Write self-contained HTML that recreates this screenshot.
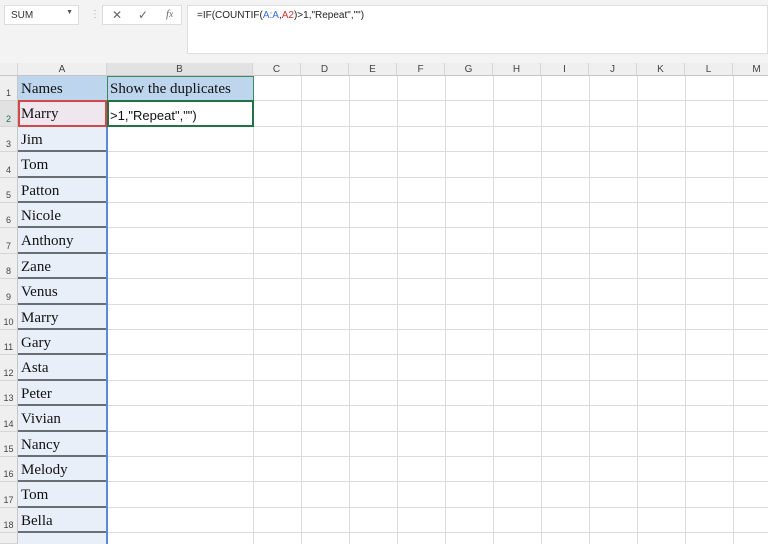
<!DOCTYPE html>
<html><head><meta charset="utf-8"><style>
*{margin:0;padding:0;box-sizing:border-box}
body{width:768px;height:544px;overflow:hidden;background:#fff;position:relative;font-family:"Liberation Sans",sans-serif}
.top{position:absolute;left:0;top:0;width:768px;height:63px;background:#f3f3f3}
.nb{position:absolute;left:4px;top:5px;width:75px;height:20px;background:#fff;border:1px solid #ddd;font-size:10px;color:#333;padding:4px 0 0 6px}
.fx{position:absolute;left:102px;top:5px;width:80px;height:20px;background:#fff;border:1px solid #ddd;color:#666;font-size:11px}
.fb{position:absolute;left:187px;top:5px;width:581px;height:49px;background:#fff;border:1px solid #ddd;font-size:10px;color:#222;padding:4px 0 0 9px}
.hdr{position:absolute;top:63px;height:13px;background:#efefef;border-right:1px solid #d6d6d6;border-bottom:1px solid #c6c6c6;font-size:10px;color:#444;text-align:center;line-height:13px}
.rh{position:absolute;left:0;width:18px;background:#efefef;border-bottom:1px solid #d6d6d6;border-right:1px solid #c6c6c6;font-size:9px;color:#444;text-align:center}
.grid{position:absolute;left:253px;top:76px;width:515px;height:468px;background-image:repeating-linear-gradient(to right,#dcdcdc 0 1px,transparent 1px 48px)}
.hl{position:absolute;left:18px;width:750px;height:1px;background:#dcdcdc}
.a{position:absolute;left:18px;width:89px;background:#e9eff9;border-bottom:2px solid #6a6e74;font-family:"Liberation Serif",serif;font-size:15px;color:#111;padding-left:3px}
</style></head><body>
<div class="top"></div>
<div class="nb">SUM<span style="position:absolute;right:5px;top:3px;font-size:7px;color:#555">▼</span></div>
<div style="position:absolute;left:90px;top:9px;color:#aaa;font-size:10px">⋮</div>
<div class="fx"><span style="position:absolute;left:9px;top:2px;font-size:12px">✕</span><span style="position:absolute;left:35px;top:2px;font-size:12px">✓</span><span style="position:absolute;left:63px;top:2px;font-family:'Liberation Serif',serif;font-style:italic;font-size:11px">f<small>x</small></span></div>
<div class="fb">=IF(COUNTIF(<span style="color:#3a6fd8">A:A</span>,<span style="color:#d23030">A2</span>)&gt;1,"Repeat","")</div>
<div class="grid"></div>
<div class="hl" style="top:100px"></div><div class="hl" style="top:126px"></div><div class="hl" style="top:151px"></div><div class="hl" style="top:177px"></div><div class="hl" style="top:202px"></div><div class="hl" style="top:227px"></div><div class="hl" style="top:253px"></div><div class="hl" style="top:278px"></div><div class="hl" style="top:304px"></div><div class="hl" style="top:329px"></div><div class="hl" style="top:354px"></div><div class="hl" style="top:380px"></div><div class="hl" style="top:405px"></div><div class="hl" style="top:431px"></div><div class="hl" style="top:456px"></div><div class="hl" style="top:481px"></div><div class="hl" style="top:507px"></div><div class="hl" style="top:532px"></div>
<div class="hdr" style="left:0;width:18px"></div>
<div class="hdr" style="left:18px;width:89px">A</div>
<div class="hdr" style="left:107px;width:146px;background:#e2e2e2">B</div>
<div class="hdr" style="left:253px;width:48px">C</div><div class="hdr" style="left:301px;width:48px">D</div><div class="hdr" style="left:349px;width:48px">E</div><div class="hdr" style="left:397px;width:48px">F</div><div class="hdr" style="left:445px;width:48px">G</div><div class="hdr" style="left:493px;width:48px">H</div><div class="hdr" style="left:541px;width:48px">I</div><div class="hdr" style="left:589px;width:48px">J</div><div class="hdr" style="left:637px;width:48px">K</div><div class="hdr" style="left:685px;width:48px">L</div><div class="hdr" style="left:733px;width:48px">M</div>
<div class="rh" style="top:76px;height:25px;line-height:34px">1</div>
<div class="rh" style="top:101px;height:26px;line-height:36px;background:#e2e2e2;color:#217346">2</div>
<div class="rh" style="top:127px;height:25px;line-height:34px">3</div>
<div class="rh" style="top:152px;height:26px;line-height:36px">4</div>
<div class="rh" style="top:178px;height:25px;line-height:34px">5</div>
<div class="rh" style="top:203px;height:25px;line-height:34px">6</div>
<div class="rh" style="top:228px;height:26px;line-height:36px">7</div>
<div class="rh" style="top:254px;height:25px;line-height:34px">8</div>
<div class="rh" style="top:279px;height:26px;line-height:36px">9</div>
<div class="rh" style="top:305px;height:25px;line-height:34px">10</div>
<div class="rh" style="top:330px;height:25px;line-height:34px">11</div>
<div class="rh" style="top:355px;height:26px;line-height:36px">12</div>
<div class="rh" style="top:381px;height:25px;line-height:34px">13</div>
<div class="rh" style="top:406px;height:26px;line-height:36px">14</div>
<div class="rh" style="top:432px;height:25px;line-height:34px">15</div>
<div class="rh" style="top:457px;height:25px;line-height:34px">16</div>
<div class="rh" style="top:482px;height:26px;line-height:36px">17</div>
<div class="rh" style="top:508px;height:25px;line-height:34px">18</div>
<div class="rh" style="top:533px;height:11px"></div>
<div class="a" style="top:76px;height:25px;line-height:26px;background:#bdd6ee;border:none">Names</div>
<div style="position:absolute;left:107px;top:76px;width:147px;height:25px;background:#bdd6ee;border:1px solid #3c8a5c;border-bottom:none;font-family:'Liberation Serif',serif;font-size:15px;line-height:25px;padding-left:2px;color:#111">Show the duplicates</div>
<div style="position:absolute;left:18px;top:100px;width:89px;height:27px;background:#f0e6ee;border:2px solid #d04848;font-family:'Liberation Serif',serif;font-size:15px;line-height:24px;padding-left:1px;color:#111">Marry</div>
<div style="position:absolute;left:107px;top:100px;width:147px;height:27px;border:2px solid #217346;font-size:13px;line-height:28px;padding-left:1px;color:#111;background:#fff">&gt;1,"Repeat","")</div>
<div class="a" style="top:127px;height:25px;line-height:26px">Jim</div>
<div class="a" style="top:152px;height:26px;line-height:27px">Tom</div>
<div class="a" style="top:178px;height:25px;line-height:26px">Patton</div>
<div class="a" style="top:203px;height:25px;line-height:26px">Nicole</div>
<div class="a" style="top:228px;height:26px;line-height:27px">Anthony</div>
<div class="a" style="top:254px;height:25px;line-height:26px">Zane</div>
<div class="a" style="top:279px;height:26px;line-height:27px">Venus</div>
<div class="a" style="top:305px;height:25px;line-height:26px">Marry</div>
<div class="a" style="top:330px;height:25px;line-height:26px">Gary</div>
<div class="a" style="top:355px;height:26px;line-height:27px">Asta</div>
<div class="a" style="top:381px;height:25px;line-height:26px">Peter</div>
<div class="a" style="top:406px;height:26px;line-height:27px">Vivian</div>
<div class="a" style="top:432px;height:25px;line-height:26px">Nancy</div>
<div class="a" style="top:457px;height:25px;line-height:26px">Melody</div>
<div class="a" style="top:482px;height:26px;line-height:27px">Tom</div>
<div class="a" style="top:508px;height:25px;line-height:26px">Bella</div>
<div class="a" style="top:533px;height:11px;border:none"></div>
<div style="position:absolute;left:106px;top:127px;width:2px;height:417px;background:#5b8ad8"></div>
</body></html>
